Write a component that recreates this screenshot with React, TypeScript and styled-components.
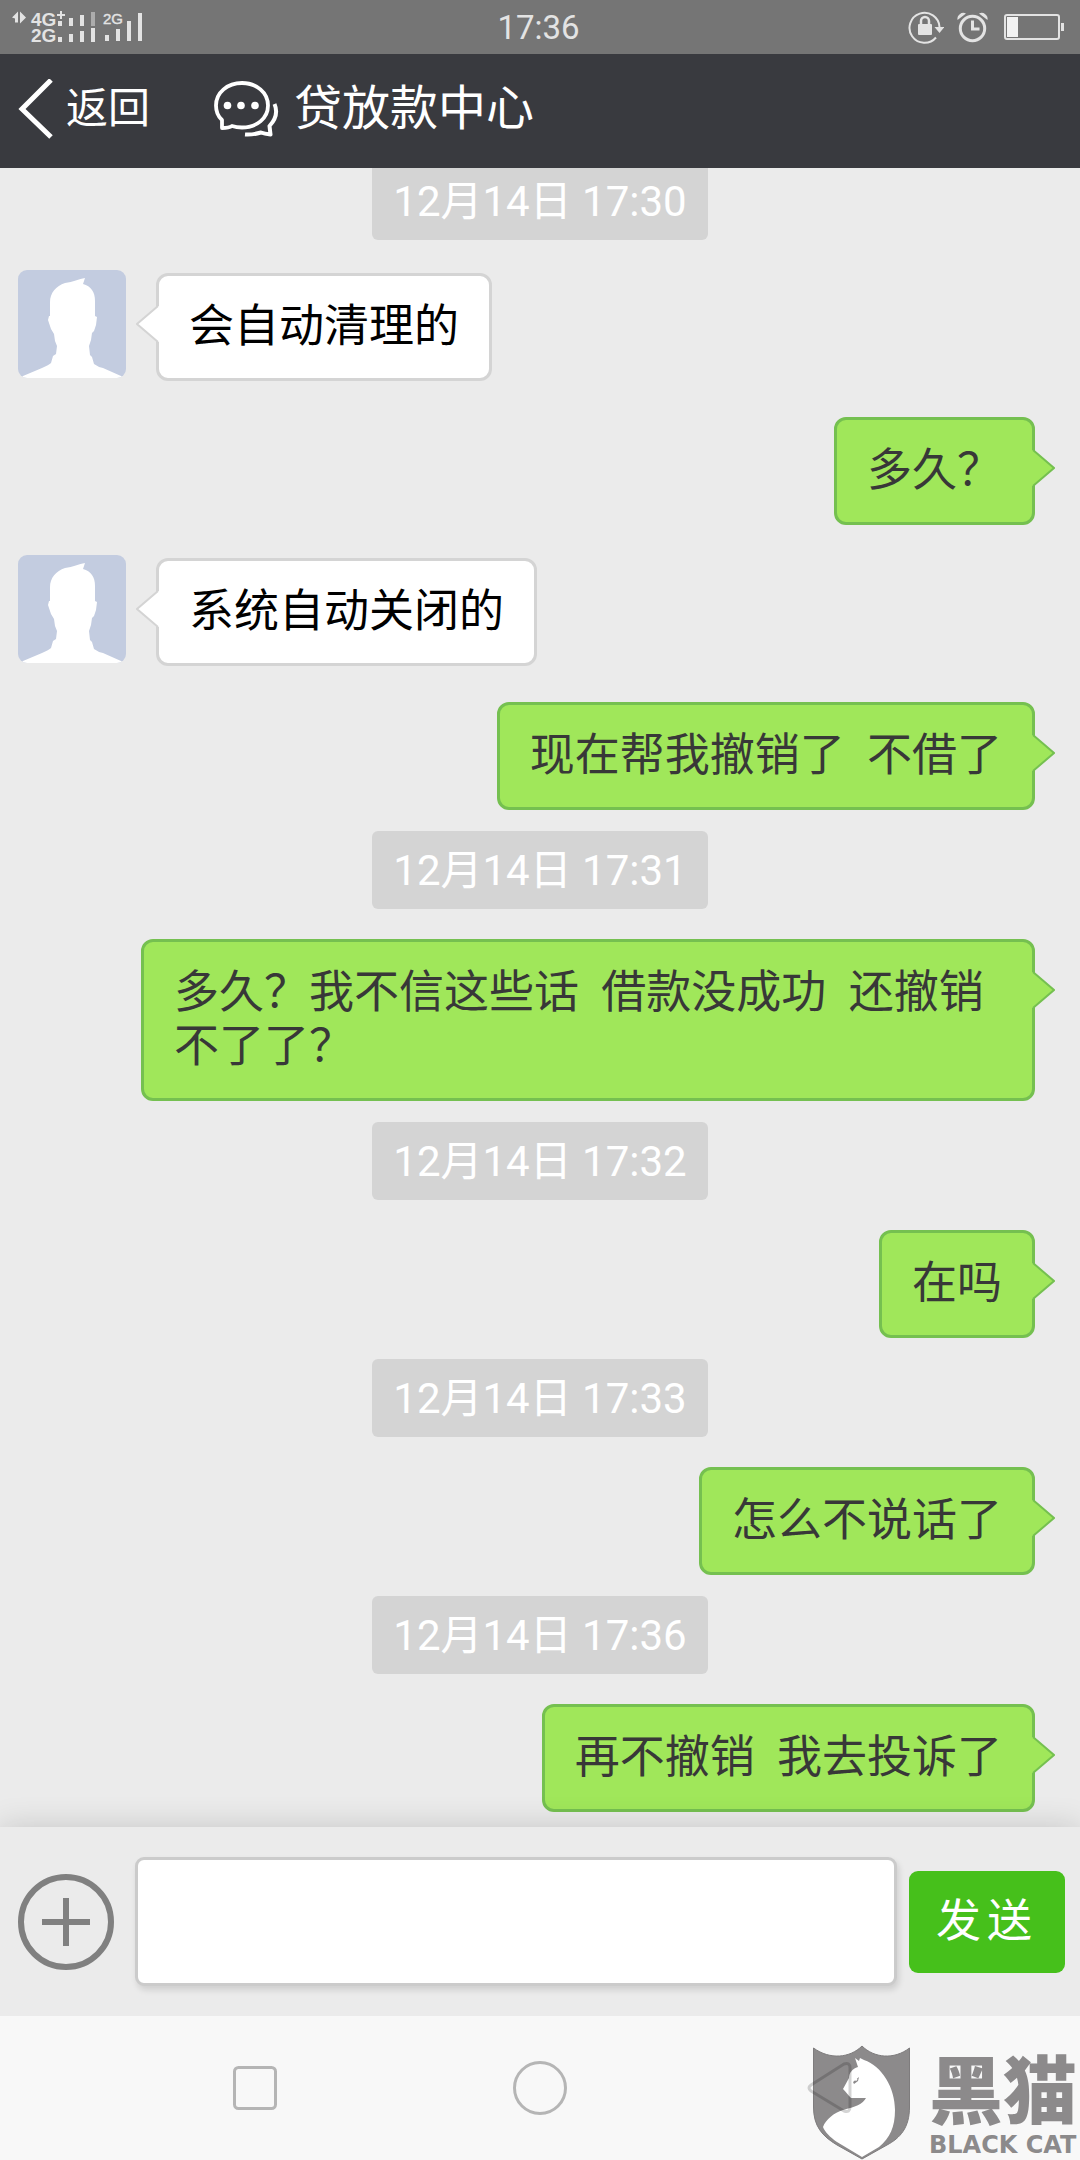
import React from "react";
import styled, { createGlobalStyle } from "styled-components";

const GlobalStyle = createGlobalStyle`
  * { box-sizing: border-box; }
  html, body { margin: 0; height: 100%; }
  #root { height: 100%; }
  body {
    font-family: Roboto, "Noto Sans CJK SC", sans-serif;
    background: #ebebeb;
  }
  button, input { font: inherit; }
`;

const Screen = styled.div`
  display: flex;
  flex-direction: column;
  min-height: 100%;
`;

const StatusBar = styled.div`
  display: grid;
  grid-template-columns: 1fr auto 1fr;
  align-items: center;
  height: 54px;
  padding: 0 15px 0 12px;
  background: #757575;
  color: #e3e3e3;
`;

const Clock = styled.time`
  padding-top: 2px;
  font-size: 33px;
  line-height: 52px;
`;

const StatusIcons = styled.div`
  display: flex;
  justify-content: flex-end;
  align-items: center;
  gap: 12px;
`;

const Header = styled.header`
  position: relative;
  z-index: 1;
  display: flex;
  align-items: center;
  height: 114px;
  padding: 0 18px 4px;
  background: #393a3f;
  color: #fff;
`;

const BackButton = styled.button`
  display: flex;
  align-items: center;
  gap: 12px;
  padding: 0;
  border: 0;
  background: none;
  color: inherit;
  font-size: 42px;
  line-height: 54px;
`;

const Title = styled.h1`
  display: flex;
  align-items: center;
  gap: 15px;
  margin: 0 0 0 63px;
  font-size: 48px;
  line-height: 54px;
  font-weight: 400;
`;

const Chat = styled.main`
  flex: 1;
  display: flex;
  flex-direction: column;
  margin-top: -27px;
  padding-bottom: 15px;
`;

const DateLabel = styled.time`
  align-self: center;
  margin-top: 21px;
  padding: 13px 21px 11px;
  border-radius: 6px;
  background: #d4d4d4;
  color: #fff;
  font-size: 42px;
  line-height: 54px;
`;

const Row = styled.div<{ $mine?: boolean }>`
  display: flex;
  justify-content: ${(p) => (p.$mine ? "flex-end" : "flex-start")};
  align-items: flex-start;
  gap: 30px;
  margin-top: 30px;
  padding: ${(p) => (p.$mine ? "0 45px 0 18px" : "0 18px 6px")};
`;

const Bubble = styled.p<{ $mine?: boolean }>`
  position: relative;
  max-width: 894px;
  margin: ${(p) => (p.$mine ? "0" : "3px 0 0")};
  padding: 24px 30px;
  border: 3px solid ${(p) => (p.$mine ? "#75c050" : "#d4d4d4")};
  border-radius: 12px;
  background: ${(p) => (p.$mine ? "#a0e75a" : "#fff")};
  color: ${(p) => (p.$mine ? "#383838" : "#000")};
  font-size: 45px;
  line-height: 54px;
  white-space: pre-wrap;
`;

const Tail = styled.svg<{ $mine?: boolean }>`
  position: absolute;
  top: 29px;
  ${(p) => (p.$mine ? "right: -23px;" : "left: -23px; transform: scaleX(-1);")}
`;

const InputBar = styled.form`
  position: relative;
  display: flex;
  align-items: center;
  gap: 12px;
  padding: 30px 15px 30px 18px;
  background: #ebebeb;
  box-shadow: 0 0 30px rgba(0, 0, 0, 0.16);
`;

const AddButton = styled.button`
  display: flex;
  margin-right: 9px;
  padding: 0;
  border: 0;
  background: none;
`;

const MessageInput = styled.input`
  flex: 1;
  min-width: 0;
  height: 129px;
  padding: 0 24px;
  border: 3px solid #cbcbcb;
  border-radius: 9px;
  background: #fff;
  font-size: 45px;
  outline: none;
  box-shadow: 2px 4px 6px rgba(0, 0, 0, 0.12);
`;

const SendButton = styled.button`
  width: 156px;
  height: 102px;
  padding: 0;
  border: 0;
  border-radius: 9px;
  background: #46c01b;
  color: #fff;
  font-size: 45px;
  line-height: 54px;
  letter-spacing: 6px;
`;

const SystemNav = styled.nav`
  position: relative;
  display: grid;
  grid-template-columns: repeat(3, 1fr);
  height: 144px;
  padding: 0 112px;
  background: #f8f8f8;
`;

const NavButton = styled.button`
  position: relative;
  display: grid;
  place-items: center;
  padding: 0;
  border: 0;
  background: none;
`;

const Watermark = styled.div`
  position: absolute;
  right: 3px;
  bottom: 0;
  display: flex;
  align-items: flex-end;
  gap: 18px;
  color: #8c8a8b;
`;

const Brand = styled.div`
  display: flex;
  flex-direction: column;
  font-weight: 900;
  white-space: nowrap;
`;

const BrandName = styled.span`
  font-family: "Noto Sans CJK SC", sans-serif;
  font-size: 74px;
  line-height: 88px;
`;

const BrandLatin = styled.span`
  font-family: "DejaVu Sans", sans-serif;
  font-size: 24px;
  line-height: 30px;
`;

const SignalIcon = () => (
  <svg width="134" height="54" viewBox="12 0 134 54" fill="#e3e3e3" fontFamily="Liberation Sans, sans-serif" fontWeight="700">
    <path d="M12 17.500l6-6v11h-3v-4zM20 11.500l6 6-6 6z" />
    <text x="31" y="26" fontSize="19">4G</text>
    <text x="31" y="42" fontSize="19">2G</text>
    <text x="103" y="24" fontSize="15" fontWeight="400" stroke="#e3e3e3" strokeWidth=".4">2G</text>
    <path d="M57 14h3v-3h2v3h3v2h-3v3h-2v-3h-3z" />
    <path d="M58 21h4v5h-4zM69 18h4v8h-4zM80 15h4v11h-4zM58 37h4v5h-4zM69 34h4v8h-4zM80 31h4v11h-4zM91 28h4v14h-4zM105 35h4v6h-4zM116 29h4v12h-4zM127 21h4v20h-4zM138 13h4v28h-4z" />
    <path d="M91 12h4v14h-4z" opacity=".5" />
  </svg>
);

const RotationLockIcon = () => (
  <svg width="36" height="34" viewBox="908 10 36 34" fill="none" stroke="#e3e3e3" strokeWidth="2">
    <path d="M936 37.500A15 15 0 1 1 939.500 27" />
    <path d="M934.500 27h10l-5 6z" fill="#e3e3e3" stroke="none" />
    <rect x="918" y="24" width="14" height="11" rx="1" fill="#e3e3e3" stroke="none" />
    <path d="M921 25v-4a4 4 0 0 1 8 0v4" strokeWidth="2.500" />
  </svg>
);

const AlarmIcon = () => (
  <svg width="36" height="34" viewBox="956 10 36 34" fill="none" stroke="#e3e3e3" strokeWidth="3">
    <circle cx="972.500" cy="28.500" r="12.200" />
    <path d="M972.500 20.500v8.500h7" />
    <path d="M957.500 20a6 6 0 0 1 8.500-6.500zM979 13.500a6 6 0 0 1 8.500 6.500z" fill="#e3e3e3" stroke="none" />
  </svg>
);

const BatteryIcon = () => (
  <svg width="61" height="34" viewBox="1004 10 61 34">
    <rect x="1005" y="15" width="54" height="24" rx="2" fill="none" stroke="#e3e3e3" strokeWidth="2" />
    <path d="M1007 17h11v20h-11z" fill="#f2f2f2" />
    <path d="M1061 23h3v8h-3z" fill="#e3e3e3" />
  </svg>
);

const ChevronIcon = () => (
  <svg width="36" height="60" viewBox="18 79 36 60">
    <path d="M51 80L22 109L51 137" fill="none" stroke="#fff" strokeWidth="5" />
  </svg>
);

const ChatIcon = () => (
  <svg width="66" height="58" viewBox="213 79 66 58" fill="none" stroke="#fff" strokeWidth="4" strokeLinejoin="round">
    <path d="M222 127V119C217.500 115 216 110 216 104.500C216 91.500 227.500 82 242 82S268 91.500 268 104.500S256.500 126.500 242 126.500C238 126.500 235 126 232 125C229 127 226 127 222 127Z" strokeWidth="3.800" />
    <circle cx="227.500" cy="104.500" r="3.800" fill="#fff" stroke="none" />
    <circle cx="241" cy="104.500" r="3.800" fill="#fff" stroke="none" />
    <circle cx="255" cy="104.500" r="3.800" fill="#fff" stroke="none" />
    <path d="M274.500 103C277.500 110 276 118 269.500 125L270.500 133.500C266 133 263.500 132.500 261 131.500C256 133 251 134 245 133.500" />
  </svg>
);

const AvatarIcon = () => (
  <svg width="108" height="108" viewBox="0 0 108 108" role="img" aria-label="头像">
    <defs>
      <clipPath id="avatar-frame">
        <rect width="108" height="108" rx="9" />
      </clipPath>
    </defs>
    <g clipPath="url(#avatar-frame)">
      <rect width="108" height="108" fill="#c3cce0" />
      <path
        fill="#fff"
        d="M3 108L5 106L24 98Q31 95 33 93L35 86L38 84L39 76L37 71L36 64L33 59L30 50L31 46L32 46V32C32 23 38 16 47 13C55 12 61 9 67 8L65 14C73 16 77 22 77 31V46L79 47L78 55L76 61L74 63L73 70L71 76L72 85L74 87L76 94Q80 97 85 98L103 106L106 108Z"
      />
    </g>
  </svg>
);

const PlusIcon = () => (
  <svg width="96" height="96" viewBox="0 0 96 96" fill="none" stroke="#808080" strokeWidth="6">
    <circle cx="48" cy="48" r="45" />
    <path d="M24 48h48M48 24v48" />
  </svg>
);

const ShieldIcon = () => (
  <svg width="98" height="116" viewBox="811 2044 98 116">
    <path
      fill="#8c8a8b"
      stroke="#7e7c7d"
      d="M811.500 2048C828 2060 848 2058 860 2046C872 2058 892 2060 907.500 2048V2107C907.500 2128 898 2138 885 2145L860 2159L835 2145C820 2136 811.500 2126 811.500 2107Z"
    />
    <path
      fill="#fff"
      d="M853 2058L857 2061L858 2058L862 2060C880 2066 893 2088 893 2110C893 2127 888 2138 877 2147L860 2157L835 2142C828 2137 823 2132 821 2127C824 2119 832 2113 841 2110C853 2107 861 2104 864 2098L849 2098C846 2095 844 2092 841 2089C843 2085 845 2082 847 2078C847 2073 850 2069 856 2067Z"
    />
    <path d="M851 2082l6-5-1 4-4 3zM853 2079l-1.500 1" fill="#8c8a8b" />
    <circle cx="854" cy="2079.500" r="1.300" fill="#fff" />
  </svg>
);

const TailShape = ({ mine }: { mine?: boolean }) => (
  <Tail $mine={mine} width="25" height="38" viewBox="0 0 25 38" aria-hidden="true">
    <path d="M0 1H3L24 19L3 37H0Z" fill={mine ? "#a0e75a" : "#fff"} />
    <path d="M3 1L24 19L3 37" fill="none" stroke={mine ? "#75c050" : "#d4d4d4"} strokeWidth="2" />
  </Tail>
);

type Item = { kind: "date" | "in" | "out"; text: string };

const items: Item[] = [
  { kind: "date", text: "12月14日 17:30" },
  { kind: "in", text: "会自动清理的" },
  { kind: "out", text: "多久？" },
  { kind: "in", text: "系统自动关闭的" },
  { kind: "out", text: "现在帮我撤销了  不借了" },
  { kind: "date", text: "12月14日 17:31" },
  { kind: "out", text: "多久？我不信这些话  借款没成功  还撤销不了了？" },
  { kind: "date", text: "12月14日 17:32" },
  { kind: "out", text: "在吗" },
  { kind: "date", text: "12月14日 17:33" },
  { kind: "out", text: "怎么不说话了" },
  { kind: "date", text: "12月14日 17:36" },
  { kind: "out", text: "再不撤销  我去投诉了" },
];

const ChatItem = ({ kind, text }: Item) => {
  if (kind === "date") return <DateLabel>{text}</DateLabel>;
  const mine = kind === "out";
  return (
    <Row $mine={mine}>
      {!mine && <AvatarIcon />}
      <Bubble $mine={mine}>
        {text}
        <TailShape mine={mine} />
      </Bubble>
    </Row>
  );
};

export default function App() {
  return (
    <Screen lang="zh-CN">
      <GlobalStyle />
      <StatusBar>
        <SignalIcon />
        <Clock>17:36</Clock>
        <StatusIcons>
          <RotationLockIcon />
          <AlarmIcon />
          <BatteryIcon />
        </StatusIcons>
      </StatusBar>
      <Header>
        <BackButton type="button">
          <ChevronIcon />
          返回
        </BackButton>
        <Title>
          <ChatIcon />
          贷放款中心
        </Title>
      </Header>
      <Chat>
        {items.map((item, i) => (
          <ChatItem key={i} {...item} />
        ))}
      </Chat>
      <InputBar onSubmit={(e) => e.preventDefault()}>
        <AddButton type="button" aria-label="更多">
          <PlusIcon />
        </AddButton>
        <MessageInput type="text" aria-label="消息" />
        <SendButton type="submit">发送</SendButton>
      </InputBar>
      <SystemNav>
        <Watermark>
          <ShieldIcon />
          <Brand>
            <BrandName>黑猫</BrandName>
            <BrandLatin>BLACK CAT</BrandLatin>
          </Brand>
        </Watermark>
        <NavButton type="button" aria-label="最近任务">
          <svg width="44" height="44" fill="none" stroke="#b5b5b5" strokeWidth="3">
            <rect x="1.500" y="1.500" width="41" height="41" rx="4" />
          </svg>
        </NavButton>
        <NavButton type="button" aria-label="主屏幕">
          <svg width="54" height="54" fill="none" stroke="#b5b5b5" strokeWidth="3">
            <circle cx="27" cy="27" r="25.500" />
          </svg>
        </NavButton>
        <NavButton type="button" aria-label="返回">
          <svg width="56" height="54" viewBox="-10 0 56 54" fill="none" stroke="#000" strokeOpacity=".17" strokeWidth="3" strokeLinejoin="round">
            <path d="M37 3Q43 1 43 7V46Q43 52 37 50L4 30Q0 27 4 24Z" />
          </svg>
        </NavButton>
      </SystemNav>
    </Screen>
  );
}
